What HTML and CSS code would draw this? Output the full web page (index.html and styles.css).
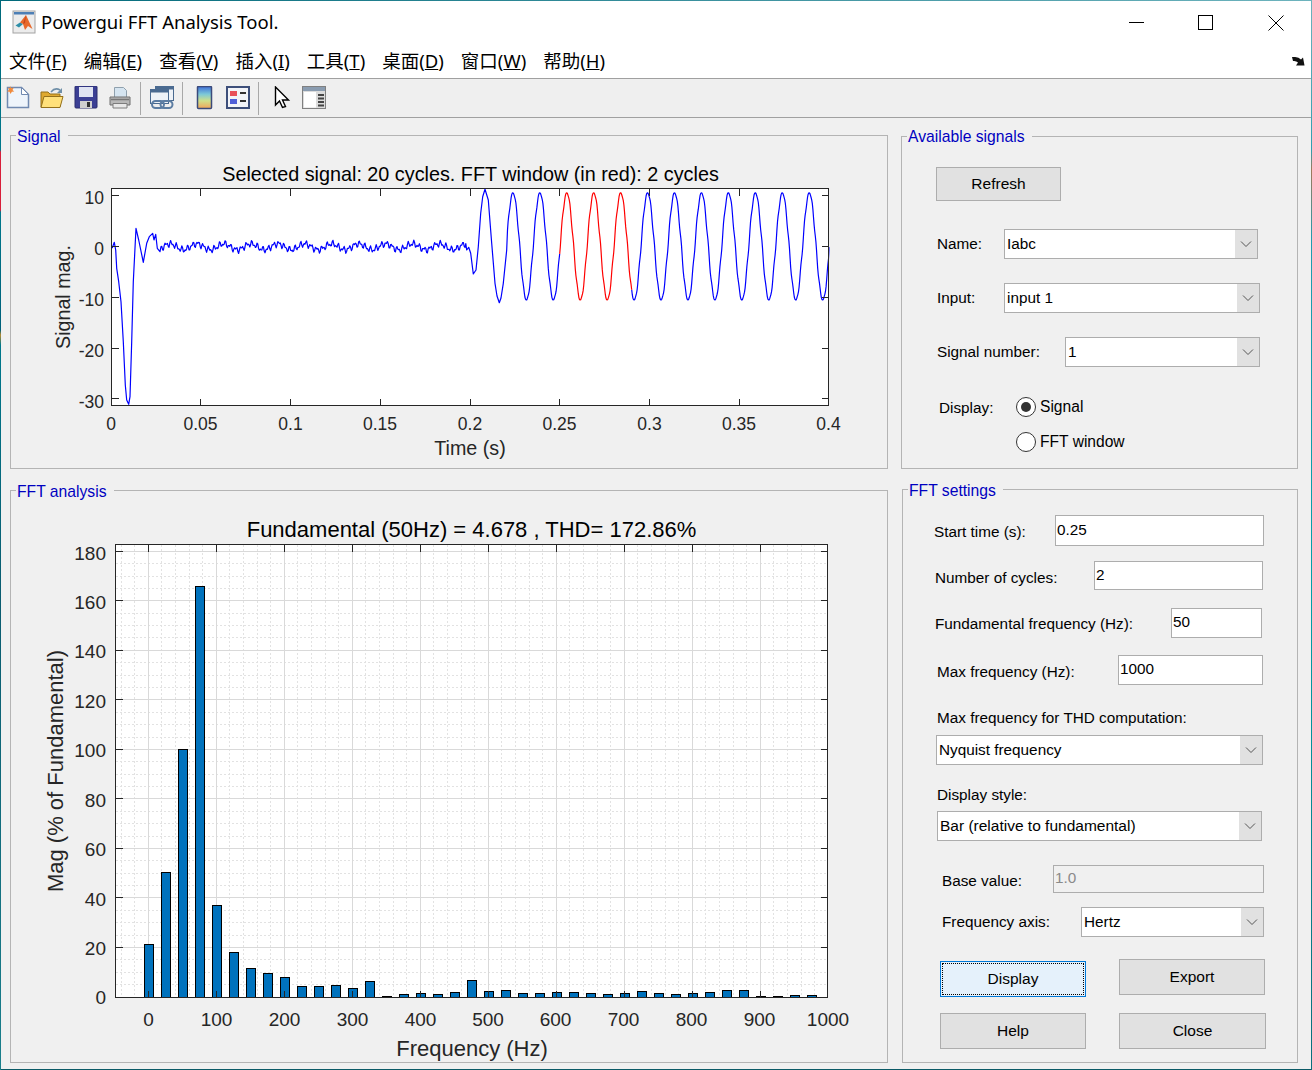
FILE: index.html
```html
<!DOCTYPE html>
<html lang="zh-CN">
<head>
<meta charset="utf-8">
<title>Powergui FFT Analysis Tool.</title>
<link rel="stylesheet" href="styles.css">
</head>
<body>
<div class="window">
  <div class="top-edge"></div>
  <header class="titlebar">
    <svg class="app-icon" viewBox="0 0 24 24" width="24" height="24">
      <rect x="1" y="1" width="22" height="22" fill="#ececec" stroke="#a3a3a3"/>
      <rect x="2" y="2" width="20" height="2.5" fill="#4d7fb5"/>
      <path d="M3.5 15.5L8 12.5 11 14 7 17.5z" fill="#2f8fa8"/>
      <path d="M8 12.5L14 5l6.5 14-4.500-3-3 4-2-6z" fill="#e8682a"/>
      <path d="M11 14l3-9-1 8z" fill="#c2451b"/>
    </svg>
    <span class="app-title">Powergui FFT Analysis Tool.</span>
    <div class="win-buttons">
      <span class="win-btn"><svg viewBox="0 0 16 16" width="16" height="16"><path d="M1 7.500h15" stroke="#000" fill="none"/></svg></span>
      <span class="win-btn"><svg viewBox="0 0 16 16" width="16" height="16"><rect x=".5" y=".5" width="14" height="14" stroke="#000" fill="none"/></svg></span>
      <span class="win-btn"><svg viewBox="0 0 16 16" width="16" height="16"><path d="M.5.500l15 15M15.500.500l-15 15" stroke="#000" fill="none"/></svg></span>
    </div>
  </header>
  <nav class="menubar">
    <span>文件(<u>F</u>)</span>
    <span>编辑(<u>E</u>)</span>
    <span>查看(<u>V</u>)</span>
    <span>插入(<u>I</u>)</span>
    <span>工具(<u>T</u>)</span>
    <span>桌面(<u>D</u>)</span>
    <span>窗口(<u>W</u>)</span>
    <span>帮助(<u>H</u>)</span>
    <svg class="dock-arrow" viewBox="0 0 13 9" width="13" height="9"><path d="M0 0Q6-.5 9 2.500L11 .5 12.500 8.500 4 8.500 6 5.500Q4 3.500 1 4z" fill="#111"/></svg>
  </nav>
  <div class="toolbar">
    <span class="tool"><svg viewBox="0 0 24 24" width="24" height="24">
      <path d="M1.500 1.500h14l7 7v13h-21z" fill="#eef4fb" stroke="#7089b0" stroke-width="1.500"/>
      <path d="M15.500 1.500v7h7z" fill="#fff" stroke="#7089b0"/>
      <path d="M4 0l1.200 2.300L7.800 1.500 6.500 4l1.800 1.500-2.500.3L4.600 8 3.500 5.800 1 5.500l2-1.700L2 1.500l2 .8z" fill="#f08a3c"/>
    </svg></span>
    <span class="tool"><svg viewBox="0 0 24 24" width="24" height="24">
      <path d="M1 6h7l2 2h10v13H1z" fill="#dfa92f" stroke="#94701a"/>
      <path d="M1 21.500l3-11h19l-3 11z" fill="#ffe07a" stroke="#94701a"/>
      <path d="M11 6q4-5 9-2" stroke="#6f8fa8" stroke-width="1.500" fill="none"/>
      <path d="M22 2v5h-5z" fill="#6f8fa8"/>
    </svg></span>
    <span class="tool"><svg viewBox="0 0 24 24" width="24" height="24">
      <rect x="1" y="0" width="22" height="22" rx="1" fill="#3b3f94" stroke="#2a2d6e"/>
      <rect x="5" y="1" width="14" height="10" fill="#dfe3f2"/>
      <rect x="6" y="15" width="12" height="7" fill="#d0d0d0"/>
      <rect x="13" y="16" width="3" height="5" fill="#333"/>
    </svg></span>
    <span class="tool"><svg viewBox="0 0 24 24" width="24" height="24">
      <path d="M6.500 1.500h9l3 3v7h-12z" fill="#d5e4f0" stroke="#8fa0ad"/>
      <path d="M2 11h20v8H2z" fill="#b8b8b8" stroke="#6f6f6f"/>
      <path d="M5 17.500h14v4.500H5z" fill="#e8e8e8" stroke="#7c7c7c"/>
      <path d="M3 13.500h18" stroke="#777" stroke-width="1.500"/>
    </svg></span>
    <span class="tool-sep"></span>
    <span class="tool"><svg viewBox="0 0 24 24" width="24" height="24">
      <rect x="5.500" y=".5" width="18" height="14" fill="#eef2f7" stroke="#4a6a90"/>
      <rect x="5.500" y=".5" width="18" height="3" fill="#4a6a90"/>
      <rect x=".5" y="3.500" width="18" height="14" fill="#eef2f7" stroke="#4a6a90"/>
      <rect x=".5" y="3.500" width="18" height="3" fill="#4a6a90"/>
      <rect x="2" y="15" width="12" height="7" rx="3.500" fill="none" stroke="#5c7da3" stroke-width="2"/>
      <rect x="10.500" y="15" width="12" height="7" rx="3.500" fill="none" stroke="#5c7da3" stroke-width="2"/>
    </svg></span>
    <span class="tool-sep"></span>
    <span class="tool"><svg viewBox="0 0 24 24" width="24" height="24">
      <defs><linearGradient id="cbar" x1="0" y1="0" x2="0" y2="1">
        <stop offset="0" stop-color="#3f6fd8"/><stop offset=".35" stop-color="#7cc8d8"/><stop offset=".65" stop-color="#cfe08a"/><stop offset="1" stop-color="#f2a45a"/>
      </linearGradient></defs>
      <rect x="5.500" y=".5" width="14" height="22" rx="1" fill="url(#cbar)" stroke="#3b4a7a" stroke-width="1.500"/>
    </svg></span>
    <span class="tool"><svg viewBox="0 0 24 24" width="24" height="24">
      <rect x="1" y="1" width="22" height="21" fill="#f2f4f8" stroke="#3d4f7a" stroke-width="2"/>
      <rect x="4" y="5" width="7" height="5" fill="#e8505a"/>
      <rect x="4" y="13" width="7" height="5" fill="#4f5fd8"/>
      <path d="M14 7h6M14 15h6" stroke="#333" stroke-width="2"/>
    </svg></span>
    <span class="tool-sep"></span>
    <span class="tool"><svg viewBox="0 0 24 24" width="24" height="24">
      <path d="M7.500 1v18l4-4 3 6.500 3-1-3-6.500h6z" fill="#fff" stroke="#000" stroke-width="1.400"/>
    </svg></span>
    <span class="tool"><svg viewBox="0 0 24 24" width="24" height="24">
      <rect x=".5" y=".5" width="23" height="22" fill="#dcdcdc" stroke="#808080"/>
      <rect x="1" y="1" width="22" height="4" fill="#8a9cb0"/>
      <rect x="2" y="6" width="12" height="15.500" fill="#fff"/>
      <path d="M16 9h6M16 12.500h6M16 16h6M16 19.500h6" stroke="#444" stroke-width="2"/>
    </svg></span>
  </div>

  <main class="content">
    <fieldset class="panel panel-signal">
      <legend>Signal</legend>
      <svg class="chart" viewBox="11 144 876 324" width="876" height="324">
        <rect x="111.500" y="188.500" width="717" height="217" fill="#fff"/>
        <g id="signal-wave"></g>
        <g id="signal-axes"></g>
        <text class="ax-title" x="470.500" y="181">Selected signal: 20 cycles. FFT window (in red): 2 cycles</text>
        <g class="tick-y">
          <text x="104" y="204">10</text><text x="104" y="255">0</text><text x="104" y="306">-10</text><text x="104" y="357">-20</text><text x="104" y="408">-30</text>
        </g>
        <g class="tick-x">
          <text x="111" y="430">0</text><text x="200.500" y="430">0.05</text><text x="290.500" y="430">0.1</text><text x="380" y="430">0.15</text><text x="470" y="430">0.2</text><text x="559.500" y="430">0.25</text><text x="649.500" y="430">0.3</text><text x="739" y="430">0.35</text><text x="828.500" y="430">0.4</text>
        </g>
        <text class="ax-label" x="470" y="455">Time (s)</text>
        <text class="ax-label" transform="translate(69.500 297) rotate(-90)">Signal mag.</text>
      </svg>
    </fieldset>

    <fieldset class="panel panel-available">
      <legend>Available signals</legend>
      <button class="btn btn-refresh">Refresh</button>
      <div class="row row-name"><span class="lbl">Name:</span><div class="combo"><span>Iabc</span><span class="chev"><svg viewBox="0 0 12 6" width="12" height="6"><path d="M1 .5l5 5 5-5" fill="none" stroke="#555"/></svg></span></div></div>
      <div class="row row-input"><span class="lbl">Input:</span><div class="combo"><span>input 1</span><span class="chev"><svg viewBox="0 0 12 6" width="12" height="6"><path d="M1 .5l5 5 5-5" fill="none" stroke="#555"/></svg></span></div></div>
      <div class="row row-number"><span class="lbl">Signal number:</span><div class="combo"><span>1</span><span class="chev"><svg viewBox="0 0 12 6" width="12" height="6"><path d="M1 .5l5 5 5-5" fill="none" stroke="#555"/></svg></span></div></div>
      <div class="row row-display"><span class="lbl">Display:</span><span class="radio radio-on"></span><span class="radio-text">Signal</span></div>
      <div class="row row-fftwin"><span class="radio"></span><span class="radio-text">FFT window</span></div>
    </fieldset>

    <fieldset class="panel panel-analysis">
      <legend>FFT analysis</legend>
      <svg class="chart" viewBox="11 499 876 563" width="876" height="563">
        <rect x="115.500" y="544.500" width="712" height="453" fill="#fff"/>
        <g id="fft-grid"></g>
        <g id="fft-bars"></g>
        <g id="fft-axes"></g>
        <text class="ax-title ax-title-lg" x="471.500" y="537">Fundamental (50Hz) = 4.678 , THD= 172.86%</text>
        <g class="tick-y tick-lg">
          <text x="106" y="560">180</text><text x="106" y="609">160</text><text x="106" y="658">140</text><text x="106" y="708">120</text><text x="106" y="757">100</text><text x="106" y="807">80</text><text x="106" y="856">60</text><text x="106" y="906">40</text><text x="106" y="955">20</text><text x="106" y="1004">0</text>
        </g>
        <g class="tick-x tick-lg">
          <text x="148.500" y="1026">0</text><text x="216.500" y="1026">100</text><text x="284.500" y="1026">200</text><text x="352.500" y="1026">300</text><text x="420.500" y="1026">400</text><text x="488" y="1026">500</text><text x="555.500" y="1026">600</text><text x="623.500" y="1026">700</text><text x="691.500" y="1026">800</text><text x="759.500" y="1026">900</text><text x="828" y="1026">1000</text>
        </g>
        <text class="ax-label ax-label-lg" x="472" y="1056">Frequency (Hz)</text>
        <text class="ax-label ax-label-lg" transform="translate(63 771) rotate(-90)">Mag (% of Fundamental)</text>
      </svg>
    </fieldset>

    <fieldset class="panel panel-settings">
      <legend>FFT settings</legend>
      <div class="row row-start"><span class="lbl">Start time (s):</span><div class="field">0.25</div></div>
      <div class="row row-cycles"><span class="lbl">Number of cycles:</span><div class="field">2</div></div>
      <div class="row row-fund"><span class="lbl">Fundamental frequency (Hz):</span><div class="field">50</div></div>
      <div class="row row-max"><span class="lbl">Max frequency (Hz):</span><div class="field">1000</div></div>
      <div class="row row-thdlabel"><span class="lbl">Max frequency for THD computation:</span></div>
      <div class="row row-thd"><div class="combo"><span>Nyquist frequency</span><span class="chev"><svg viewBox="0 0 12 6" width="12" height="6"><path d="M1 .5l5 5 5-5" fill="none" stroke="#555"/></svg></span></div></div>
      <div class="row row-stylelabel"><span class="lbl">Display style:</span></div>
      <div class="row row-style"><div class="combo"><span>Bar (relative to fundamental)</span><span class="chev"><svg viewBox="0 0 12 6" width="12" height="6"><path d="M1 .5l5 5 5-5" fill="none" stroke="#555"/></svg></span></div></div>
      <div class="row row-base"><span class="lbl">Base value:</span><div class="field field-off">1.0</div></div>
      <div class="row row-axis"><span class="lbl">Frequency axis:</span><div class="combo"><span>Hertz</span><span class="chev"><svg viewBox="0 0 12 6" width="12" height="6"><path d="M1 .5l5 5 5-5" fill="none" stroke="#555"/></svg></span></div></div>
      <div class="row row-btn1"><button class="btn btn-focus"><span>Display</span></button><button class="btn btn-export">Export</button></div>
      <div class="row row-btn2"><button class="btn">Help</button><button class="btn btn-close">Close</button></div>
    </fieldset>
  </main>
  <div class="bottom-edge"></div>
</div>
<script src="chart.js"></script>
</body>
</html>
```
FILE: styles.css
```css
* { box-sizing: border-box; }
html, body { margin: 0; padding: 0; }
body { font-family: "Liberation Sans", Arial, sans-serif; background: #f0f0f0; }

.window {
  position: relative;
  width: 1312px;
  height: 1070px;
  display: flex;
  flex-direction: column;
  padding: 0 1px;
  background: #f0f0f0;
  overflow: hidden;
}
.window::before,
.window::after {
  content: "";
  position: absolute;
  top: 0;
  bottom: 0;
  width: 1px;
}
.window::before {
  left: 0;
  background: linear-gradient(180deg, #00697a 0, #00788c 150px, #d81e3a 152px, #d81e3a 210px, #00788c 212px, #00607a 330px, #b88a2e 335px, #00788c 345px, #0a5c70 600px, #1a7f8c 1070px);
}
.window::after {
  right: 0;
  background: linear-gradient(180deg, #6db3bd 0, #2f9fb0 150px, #a0785a 170px, #1f9db0 240px, #00a0a8 600px, #0a6f7c 1070px);
}
.top-edge { height: 1px; flex: none; margin: 0 -1px; background: linear-gradient(90deg, #00697a, #6db3bd); }
.bottom-edge { height: 1px; flex: none; margin: 0 -1px; background: #0b5a66; }

.titlebar {
  flex: none;
  height: 39px;
  display: flex;
  align-items: center;
  background: #fff;
  padding: 2px 0 0 11px;
}
.app-icon { flex: none; }
.app-title {
  margin-left: 5px;
  font: 18.500px "Noto Sans", "Open Sans", sans-serif;
  color: #000;
}
.win-buttons { margin-left: auto; display: flex; }
.win-btn { width: 70px; height: 37px; padding-top: 3px; display: flex; align-items: center; justify-content: center; }

.menubar {
  flex: none;
  height: 39px;
  display: flex;
  align-items: center;
  gap: 17px;
  padding: 2px 6px 0 8px;
  background: #fff;
  border-bottom: 1px solid #a0a0a0;
  font: 18.500px "Noto Sans", "Noto Sans CJK SC", sans-serif;
  color: #000;
}
.dock-arrow { margin-left: auto; margin-top: 3px; }

.toolbar {
  flex: none;
  height: 39px;
  display: flex;
  align-items: center;
  background: #efefef;
  border-bottom: 1px solid #a0a0a0;
}
.tool { width: 34px; display: flex; justify-content: center; flex: none; }
.tool-sep { width: 1px; height: 33px; margin: 0 4px 0 3px; background: #a8a8a8; flex: none; }

.content {
  flex: 1;
  min-height: 0;
  display: grid;
  grid-template-columns: 878px 397px;
  grid-template-rows: 343px 583px;
  column-gap: 13px;
  row-gap: 11px;
  padding: 8px 0 0 9px;
}
.panel {
  min-width: 0;
  margin: 0;
  padding: 0;
  border: 1px solid #b4b4b4;
  color: #000;
}
.panel legend {
  margin-left: 5px;
  padding: 0 7px 0 1px;
  height: 18px;
  font-size: 15.700px;
  line-height: 22px;
  color: #0000c0;
}
.panel-available { margin-top: 1px; }
.panel-available legend { line-height: 20px; }
.panel-analysis { margin-top: 1px; }
.panel-settings { margin-left: 1px; }

.chart { display: block; font-family: "Liberation Sans", Arial, sans-serif; }
.ax-title { font-size: 19.800px; fill: #000; text-anchor: middle; }
.ax-title-lg { font-size: 22px; }
.ax-label { font-size: 19.700px; fill: #262626; text-anchor: middle; }
.ax-label-lg { font-size: 22px; }
.tick-x text { font-size: 17.500px; fill: #262626; text-anchor: middle; }
.tick-y text { font-size: 17.500px; fill: #262626; text-anchor: end; }
.tick-lg text { font-size: 19px; }

.row { display: flex; align-items: center; font-size: 15.300px; }
.lbl { flex: none; white-space: nowrap; line-height: 18px; }
.field, .combo {
  flex: none;
  height: 30px;
  display: flex;
  align-items: center;
  background: #fff;
  border: 1px solid #adadad;
  white-space: nowrap;
}
.field { padding-left: 1px; padding-bottom: 2px; }
.combo { padding-left: 2px; justify-content: space-between; }
.combo > span:first-child { padding-bottom: 1px; }
.chev {
  width: 22px;
  height: 100%;
  flex: none;
  display: flex;
  align-items: center;
  justify-content: center;
  background: #e1e1e1;
}
.field-off { background: #f0f0f0; color: #8a8a8a; }

.btn {
  flex: none;
  display: block;
  width: 146px;
  height: 36px;
  padding: 0;
  margin: 0;
  background: #e1e1e1;
  border: 1px solid #adadad;
  font: 15.500px "Liberation Sans", Arial, sans-serif;
  color: #000;
}
.btn-refresh { width: 125px; height: 34px; margin: 22px 0 0 34px; }
.btn-focus {
  margin-top: 2px;
  padding: 1px;
  background: #e5f1fb;
  border-color: #0078d7;
}
.btn-focus span {
  display: flex;
  height: 100%;
  align-items: center;
  justify-content: center;
  border: 1px dotted #000;
}
.btn-export { margin-left: 33px; margin-bottom: 2px; }
.btn-close { margin-left: 33px; width: 147px; }

.radio {
  flex: none;
  width: 20px;
  height: 20px;
  border-radius: 50%;
  border: 1px solid #333;
  background: #fff;
  display: flex;
  align-items: center;
  justify-content: center;
}
.radio-on::before {
  content: "";
  width: 10px;
  height: 10px;
  border-radius: 50%;
  background: #333;
}
.radio-text { margin-left: 4px; font-size: 15.600px; }

.row-name { margin: 28px 0 0 35px; }
.row-name .lbl { width: 67px; }
.row-name .combo { width: 254px; }
.row-input { margin: 24px 0 0 35px; }
.row-input .lbl { width: 67px; }
.row-input .combo { width: 256px; }
.row-number { margin: 24px 0 0 35px; }
.row-number .lbl { width: 128px; }
.row-number .combo { width: 195px; }
.row-display { margin: 30px 0 0 37px; height: 20px; }
.row-display .lbl { width: 77px; padding-top: 2px; }
.row-fftwin { margin: 15px 0 0 114px; height: 20px; }

.row-start { margin: 17px 0 0 31px; }
.row-start .lbl { width: 121px; padding-top: 3px; }
.row-start .field { width: 209px; height: 31px; }
.row-cycles { margin: 15px 0 0 32px; }
.row-cycles .lbl { width: 159px; padding-top: 4px; }
.row-cycles .field { width: 169px; height: 29px; }
.row-fund { margin: 18px 0 0 32px; }
.row-fund .lbl { width: 236px; padding-top: 1px; }
.row-fund .field { width: 91px; }
.row-max { margin: 17px 0 0 34px; }
.row-max .lbl { width: 181px; padding-top: 4px; }
.row-max .field { width: 145px; }
.row-thdlabel { margin: 24px 0 0 34px; height: 18px; }
.row-thd { margin: 8px 0 0 33px; }
.row-thd .combo { width: 327px; }
.row-stylelabel { margin: 21px 0 0 34px; height: 18px; }
.row-style { margin: 7px 0 0 34px; }
.row-style .combo { width: 325px; font-size: 15.500px; }
.row-base { margin: 24px 0 0 39px; }
.row-base .lbl { width: 111px; padding-top: 3px; }
.row-base .field { width: 211px; height: 28px; }
.row-axis { margin: 14px 0 0 39px; }
.row-axis .lbl { width: 139px; }
.row-axis .combo { width: 183px; }
.row-btn1 { margin: 22px 0 0 37px; align-items: flex-start; }
.row-btn2 { margin: 16px 0 0 37px; }
```
FILE: chart.js
```js
(function () {
  var NS = "http://www.w3.org/2000/svg";

  function add(parent, tag, attrs) {
    var el = document.createElementNS(NS, tag);
    for (var k in attrs) el.setAttribute(k, attrs[k]);
    parent.appendChild(el);
    return el;
  }
  function snap(v) { return Math.floor(v) + 0.5; }
  function pts(list) {
    return list.map(function (p, i) {
      return (i ? "L" : "M") + p[0].toFixed(1) + " " + p[1].toFixed(1);
    }).join("");
  }

  /* ---------- Signal plot ---------- */
  var AX = { l: 111.5, r: 828.5, t: 188.5, b: 405.5 };
  var clip = add(document.querySelector(".panel-signal svg"), "clipPath", { id: "sigclip" });
  add(clip, "rect", { x: AX.l, y: AX.t - 1, width: AX.r - AX.l + 1, height: AX.b - AX.t + 1 });

  var start = [[110.7,246.7],[112.3,247.7],[114.3,242.3],[115.7,250],[116.7,268.3],[118.7,281.7],[121,301.7],[123.3,341.7],[125.3,385],[126.7,400],[128.7,404.3],[130,396.7],[131.7,341.7],[133.3,281.7],[136,228.3],[138.7,240],[143.3,262.3],[146.7,243.3],[149.3,236.7],[152.7,233.3],[154,240],[155.7,234.3],[157.3,248.3],[160,251.7]];
  var bridge = [[466.7,250],[468.7,247.3],[470.7,253.3],[473.3,274],[476,270],[478.3,246.7],[480.7,213.3],[482.7,196.7],[485,189.3],[488.3,200],[491.7,243.3],[495,283.3],[497,296],[499.3,302.7],[501,298],[503.3,283.3],[506.7,250]];

  function noise(x) {
    return 246.8 - 3 * Math.cos(2 * Math.PI * (x - 170) / 26.94)
      + 2.2 * Math.sin(2 * Math.PI * x / 5.39)
      + 1.7 * Math.sin(2 * Math.PI * x / 2.9);
  }
  function sine(x) {
    var th = 2 * Math.PI * (x - 513) / 26.94;
    var edge = Math.abs(Math.sin(th));
    return 246.4 - 53.6 * Math.cos(th) + 2.6 * edge * Math.sin(7 * th);
  }

  var all = start.slice(), x;
  for (x = 161; x < 466.5; x += 0.8) all.push([x, noise(x)]);
  all = all.concat(bridge);
  for (x = 507.5; x <= 830; x += 0.6) all.push([x, sine(x)]);

  function firstAt(v) {
    for (var i = 0; i < all.length; i++) if (all[i][0] >= v) return i;
    return all.length - 1;
  }
  var ia = firstAt(559.3), ib = firstAt(631.7);

  var wave = document.getElementById("signal-wave");
  wave.setAttribute("clip-path", "url(#sigclip)");
  [[all.slice(0, ia + 1), "#0000ff"], [all.slice(ib), "#0000ff"], [all.slice(ia, ib + 1), "#ff0000"]].forEach(function (s) {
    add(wave, "path", { d: pts(s[0]), fill: "none", stroke: s[1], "stroke-width": 1.2, "stroke-linejoin": "round" });
  });

  function drawAxes(g, box, xs, ys, len) {
    var d = "";
    xs.forEach(function (v) {
      d += "M" + v + " " + box.b + "v-" + len + "M" + v + " " + box.t + "v" + len;
    });
    ys.forEach(function (v) {
      d += "M" + box.l + " " + v + "h" + len + "M" + box.r + " " + v + "h-" + len;
    });
    add(g, "path", { d: d, stroke: "#262626", fill: "none", "shape-rendering": "crispEdges" });
    add(g, "rect", { x: box.l, y: box.t, width: box.r - box.l, height: box.b - box.t, fill: "none", stroke: "#262626", "shape-rendering": "crispEdges" });
  }
  drawAxes(document.getElementById("signal-axes"), AX,
    [200.5, 290.5, 380.5, 470.5, 559.5, 649.5, 739.5],
    [195.5, 246.5, 297.5, 348.5, 398.5], 7);

  /* ---------- FFT plot ---------- */
  var FB = { l: 115.5, r: 827.5, t: 544.5, b: 997.5 };
  function fx(f) { return 148.3 + 0.68 * f; }
  function fy(v) { return 997 - 2.476 * v; }

  var mags = [21.3,50.3,100,165.9,37,18,11.6,9.6,8,4.3,4.3,4.7,3.5,6.3,0.3,1.1,1.5,1.1,1.9,6.7,2.3,2.7,1.5,1.5,1.9,1.9,1.5,1.1,1.5,2.3,1.5,1.1,1.5,1.9,2.7,2.7,0.3,0.3,0.7,0.7];

  var grid = document.getElementById("fft-grid");
  var f, v, minor = "", major = "";
  for (f = -40; f < 1000; f += 20) {
    if (f % 100 !== 0) minor += "M" + snap(fx(f)) + " " + FB.t + "V" + FB.b;
    else major += "M" + snap(fx(f)) + " " + FB.t + "V" + FB.b;
  }
  for (v = 0; v <= 180; v += 5) {
    if (v % 20 !== 0) minor += "M" + FB.l + " " + snap(fy(v)) + "H" + FB.r;
    else major += "M" + FB.l + " " + snap(fy(v)) + "H" + FB.r;
  }
  add(grid, "path", { d: minor, stroke: "#e2e2e2", "stroke-dasharray": "2 2", fill: "none", "shape-rendering": "crispEdges" });
  add(grid, "path", { d: major, stroke: "#d9d9d9", fill: "none", "shape-rendering": "crispEdges" });

  var bars = document.getElementById("fft-bars");
  mags.forEach(function (m, i) {
    var c = fx(i * 25) + 0.4;
    var top = snap(fy(m));
    add(bars, "rect", {
      x: snap(c - 4.5), y: top, width: 9, height: FB.b - top,
      fill: "#0072bd", stroke: "#000", "shape-rendering": "crispEdges"
    });
  });

  var xt = [], yt = [];
  for (f = 0; f < 1000; f += 100) xt.push(snap(fx(f)));
  for (v = 20; v <= 180; v += 20) yt.push(snap(fy(v)));
  drawAxes(document.getElementById("fft-axes"), FB, xt, yt, 7);
})();
```
